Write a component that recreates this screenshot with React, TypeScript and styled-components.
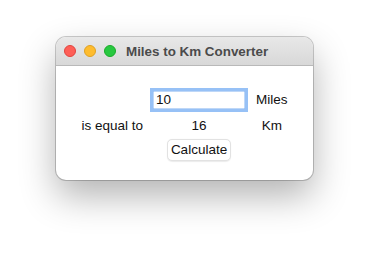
import React from 'react';
import styled, { createGlobalStyle } from 'styled-components';

const GlobalStyle = createGlobalStyle`
  html, body {
    margin: 0;
    padding: 0;
    background: #ffffff;
  }
  body {
    font-family: "Liberation Sans", Arial, sans-serif;
  }
`;

const Page = styled.div`
  width: 369px;
  height: 254px;
  padding: 37px 0 0 56px;
  box-sizing: border-box;
`;

const Window = styled.div`
  width: 257px;
  height: 143px;
  border-radius: 10px;
  background: #ffffff;
  box-shadow: 0 0 0 1px rgba(0, 0, 0, 0.2), 0 16px 36px rgba(0, 0, 0, 0.3);
  overflow: hidden;
  display: flex;
  flex-direction: column;
`;

const TitleBar = styled.div`
  height: 28px;
  flex: none;
  display: flex;
  align-items: center;
  padding-left: 8px;
  background: linear-gradient(#e8e8e8, #d8d8d8);
  border-bottom: 1px solid #b9b9b9;
`;

const Lights = styled.div`
  display: flex;
  gap: 8px;
`;

const Light = styled.span<{ $color: string; $edge: string }>`
  width: 12px;
  height: 12px;
  border-radius: 50%;
  box-sizing: border-box;
  background: ${(p) => p.$color};
  border: 0.5px solid ${(p) => p.$edge};
`;

const Title = styled.div`
  margin-left: 10px;
  font-size: 13.4px;
  font-weight: bold;
  color: #4b4b4b;
`;

const Content = styled.div`
  flex: 1;
  display: grid;
  grid-template-columns: auto 98px auto;
  grid-template-rows: 24px 27px 22px;
  column-gap: 7px;
  padding-top: 2px;
  justify-content: center;
  align-content: center;
  font-size: 13.5px;
  color: #111111;
`;

const Cell = styled.div<{ $col: number; $row: number; $gap?: number }>`
  grid-column: ${(p) => p.$col};
  grid-row: ${(p) => p.$row};
  display: flex;
  align-items: center;
  justify-content: center;
  padding-left: ${(p) => p.$gap ?? 0}px;
`;

const Entry = styled.input`
  width: 98px;
  height: 24px;
  box-sizing: border-box;
  border: 3px solid #97c1f6;
  outline: none;
  box-shadow: 0 0 0 0.5px #7fb0f0 inset;
  padding: 0 0 0 3px;
  font-family: "Liberation Sans", Arial, sans-serif;
  font-size: 13.5px;
  color: #111111;
  background: #ffffff;
`;

const Button = styled.button`
  height: 22px;
  width: 64px;
  padding: 0;
  border: 1px solid #e2e2e2;
  border-radius: 5px;
  background: #ffffff;
  box-shadow: 0 0.5px 1px rgba(0, 0, 0, 0.08);
  font-family: "Liberation Sans", Arial, sans-serif;
  font-size: 13.5px;
  color: #111111;
`;

export default function App() {
  return (
    <>
      <GlobalStyle />
      <Page>
        <Window>
          <TitleBar>
            <Lights>
              <Light $color="#fe5f57" $edge="#e0443e" />
              <Light $color="#febc2e" $edge="#dea123" />
              <Light $color="#28c840" $edge="#1aab29" />
            </Lights>
            <Title>Miles to Km Converter</Title>
          </TitleBar>
          <Content>
            <Cell $col={2} $row={1}>
              <Entry defaultValue="10" />
            </Cell>
            <Cell $col={3} $row={1} $gap={1}>Miles</Cell>
            <Cell $col={1} $row={2}>is equal to</Cell>
            <Cell $col={2} $row={2}>16</Cell>
            <Cell $col={3} $row={2} $gap={1}>Km</Cell>
            <Cell $col={2} $row={3}>
              <Button>Calculate</Button>
            </Cell>
          </Content>
        </Window>
      </Page>
    </>
  );
}
